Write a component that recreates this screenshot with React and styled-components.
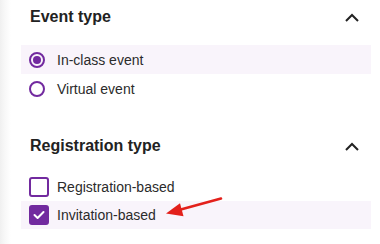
import React from "react";
import styled, { createGlobalStyle } from "styled-components";

const GlobalStyle = createGlobalStyle`
  html, body {
    margin: 0;
    padding: 0;
    background: #ffffff;
  }
  body {
    font-family: "Liberation Sans", Arial, sans-serif;
    color: #2b2b2b;
  }
`;

const purple = "#722a9f";

const Chevron = () => (
  <svg width="14" height="9" viewBox="0 0 14 9">
    <polyline points="1,8 7,2 13,8" fill="none" stroke="#222" strokeWidth="2" />
  </svg>
);

const Check = () => (
  <svg width="12" height="10" viewBox="0 0 12 10">
    <polyline points="1.5,5 4.6,8 10.5,2" fill="none" stroke="#fff" strokeWidth="2" strokeLinecap="round" strokeLinejoin="round" />
  </svg>
);

const App = () => {
  return (
    <Panel>
      <GlobalStyle />
      <Section>
        <Header>
          <Title>Event type</Title>
          <Chevron />
        </Header>
        <List>
          <Row $active $h={29}>
            <Slot><Radio $checked /></Slot>
            <Label>In-class event</Label>
          </Row>
          <Row $h={29}>
            <Slot><Radio /></Slot>
            <Label>Virtual event</Label>
          </Row>
        </List>
      </Section>

      <Section>
        <Header>
          <Title>Registration type</Title>
          <Chevron />
        </Header>
        <List $gap={17}>
          <Row $h={28}>
            <Slot><Box /></Slot>
            <Label>Registration-based</Label>
          </Row>
          <Row $active $h={28}>
            <Slot><Box $checked><Check /></Box></Slot>
            <Label>Invitation-based</Label>
          </Row>
        </List>
      </Section>

      {/* red annotation arrow */}
      <Arrow width="380" height="244" viewBox="0 0 380 244">
        <line x1="221" y1="198.5" x2="178" y2="210.2" stroke="#e3201b" strokeWidth="2.6" strokeLinecap="round" />
        <polygon points="166,213.5 180,203.2 183.5,216.3" fill="#e3201b" />
      </Arrow>
    </Panel>
  );
};

export default App;

const Panel = styled.div`
position: relative;
width: 380px;
height: 244px;
box-sizing: border-box;
padding: 0 9px 0 21px;
background: linear-gradient(to right, #f0f0f0 0px, #f8f8f8 5px, #ffffff 11px);
overflow: hidden;
`;

const Section = styled.div`
padding-top: 7px;
padding-bottom: 26px;
`;

const Header = styled.div`
height: 20px;
display: flex;
align-items: center;
justify-content: space-between;
padding: 0 12px 0 9px;
`;

const Title = styled.div`
font-size: 16px;
line-height: 20px;
font-weight: bold;
color: #222;
`;

const List = styled.div`
margin-top: ${(p) => p.$gap || 18}px;
display: flex;
flex-direction: column;
`;

const Row = styled.div`
height: ${(p) => p.$h}px;
display: flex;
align-items: center;
padding-left: 8px;
background: ${(p) => (p.$active ? "#f9f4fb" : "transparent")};
`;

const Slot = styled.div`
width: 28px;
display: flex;
align-items: center;
`;

const Radio = styled.span`
width: 16px;
height: 16px;
box-sizing: border-box;
border: 2px solid ${purple};
border-radius: 50%;
display: flex;
align-items: center;
justify-content: center;

&::after {
  content: "";
  width: 8px;
  height: 8px;
  border-radius: 50%;
  background: ${purple};
  display: ${(p) => (p.$checked ? "block" : "none")};
}
`;

const Box = styled.span`
width: 20px;
height: 20px;
box-sizing: border-box;
border: 2px solid ${purple};
border-radius: 3px;
background: ${(p) => (p.$checked ? purple : "#fff")};
display: flex;
align-items: center;
justify-content: center;
`;

const Label = styled.span`
font-size: 14px;
color: #2b2b2b;
`;

const Arrow = styled.svg`
position: absolute;
left: 0;
top: 0;
pointer-events: none;
`;
